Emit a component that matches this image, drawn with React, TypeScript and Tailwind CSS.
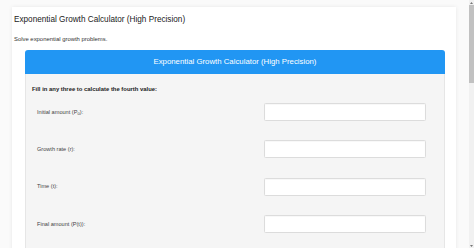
import React, { useState } from 'react';

type Field = {
  key: string;
  label: React.ReactNode;
};

const fields: Field[] = [
  { key: 'p0', label: <>Initial amount (P<sub className="text-[0.75em]">0</sub>):</> },
  { key: 'r', label: 'Growth rate (r):' },
  { key: 't', label: 'Time (t):' },
  { key: 'pt', label: 'Final amount (P(t)):' },
];

// scrollbar arrow, drawn small like the downscaled browser one
const Arrow = ({ up }: { up?: boolean }) => (
  <div className="flex h-[5px] items-center justify-center">
    <svg width="3" height="2" viewBox="0 0 3 2">
      <path d={up ? 'M0 2 L1.5 0 L3 2 Z' : 'M0 0 L1.5 2 L3 0 Z'} fill="#777" />
    </svg>
  </div>
);

export default function App() {
  const [values, setValues] = useState<Record<string, string>>({
    p0: '',
    r: '',
    t: '',
    pt: '',
  });

  return (
    <div className="flex h-[248px] overflow-hidden bg-[#fafafa] text-[#222] [font-family:'Liberation_Sans',Arial,sans-serif]">
      <div className="flex-1">
        <div className="ml-[12px] mt-[7px] w-[444px] min-h-[745px] bg-white pl-[2px] pt-[8px] shadow-[0_0_4px_rgba(0,0,0,0.08)]">
          {/* page heading */}
          <h1 className="h-[10px] text-[8.2px] leading-[10px] font-normal">
            Exponential Growth Calculator (High Precision)
          </h1>
          <p className="mt-[10px] h-[8px] text-[5.9px] leading-[8px] text-[#333]">
            Solve exponential growth problems.
          </p>

          {/* calculator card */}
          <div className="ml-[11px] mt-[7px] w-[420px]">
            <div className="flex h-[24px] items-center justify-center rounded-t-[3px] bg-[#2196f3] text-[7.8px] text-white">
              Exponential Growth Calculator (High Precision)
            </div>
            <div className="min-h-[400px] border-x border-b border-[#e6e6e6] bg-[#f5f5f5] px-[6px] pt-[11px] pb-[20px]">
              <p className="h-[8px] text-[5.9px] leading-[8px] font-bold">
                Fill in any three to calculate the fourth value:
              </p>
              <div className="mt-[10px] flex flex-col gap-[19.3px] pl-[5px] pr-[12.5px]">
                {fields.map((f) => (
                  <div key={f.key} className="flex h-[18px] items-center">
                    <label className="flex-1 text-[5.6px] text-[#444]">{f.label}</label>
                    <input
                      type="text"
                      value={values[f.key]}
                      onChange={(e) => setValues({ ...values, [f.key]: e.target.value })}
                      className="h-[18px] w-[162px] rounded-[1.5px] border border-[#dcdcdc] bg-white px-[3px] text-[5.9px] outline-none shadow-[inset_0_0.5px_1px_rgba(0,0,0,0.06)]"
                    />
                  </div>
                ))}
              </div>
            </div>
          </div>
        </div>
      </div>

      {/* page scrollbar */}
      <div className="flex w-[5px] flex-col bg-[#f1f1f1]">
        <Arrow up />
        <div className="h-[78px] bg-[#c1c1c1]" />
        <div className="flex-1" />
        <Arrow />
      </div>
    </div>
  );
}
